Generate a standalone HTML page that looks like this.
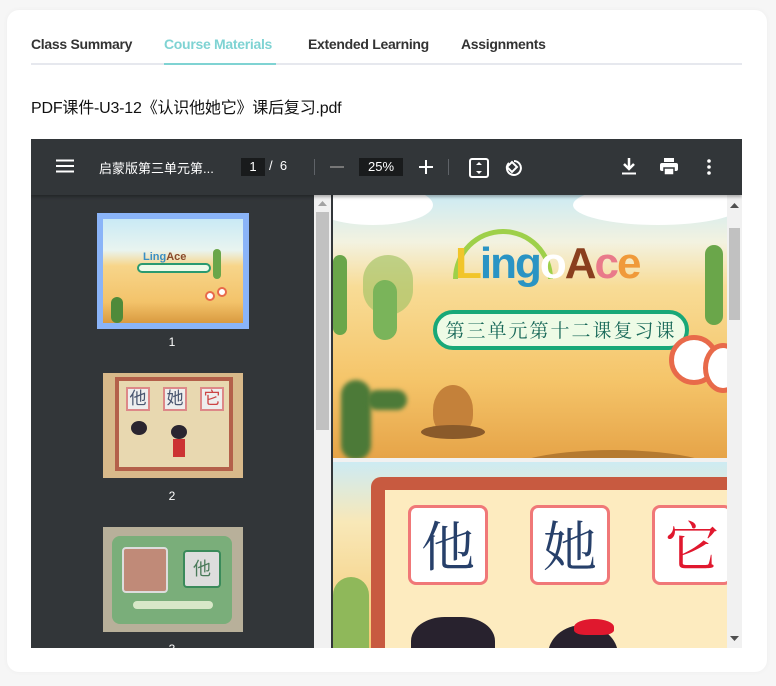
<!DOCTYPE html>
<html><head><meta charset="utf-8"><style>
*{box-sizing:border-box;margin:0;padding:0}
body{width:776px;height:686px;background:#f6f6f6;font-family:"Liberation Sans","Noto Sans CJK SC",sans-serif;position:relative;overflow:hidden}
.card{position:absolute;left:7px;top:10px;width:760px;height:662px;background:#fff;border-radius:12px;box-shadow:0 0 6px rgba(0,0,0,.04)}
.tabs{position:absolute;left:31px;top:36px;font-size:14px;font-weight:bold;color:#333;letter-spacing:-.3px}
.tabs span{position:absolute;white-space:nowrap}
.line{position:absolute;left:31px;top:63px;width:711px;height:2px;background:#e6e8ee}
.act{position:absolute;left:164px;top:63px;width:112px;height:2px;background:#7fd3d3}
.title{position:absolute;left:31px;top:94px;font-size:16px;color:#111;letter-spacing:-.2px}
.viewer{position:absolute;left:31px;top:139px;width:711px;height:509px;background:#323639;overflow:hidden}
.tb{position:absolute;left:0;top:0;width:711px;height:56px;background:#323639;box-shadow:0 2px 3px rgba(0,0,0,.3);z-index:2;color:#fff}
.tb .t{position:absolute;font-size:13px;top:19px}
.box{position:absolute;background:#191b1c;height:18px;top:19px;font-size:13px;color:#fff;text-align:center;line-height:18px}
.sep{position:absolute;top:20px;width:1px;height:16px;background:#5f6368}
.sb{position:absolute;left:283px;top:56px;width:17px;height:453px;background:#f1f1f1}
.main{position:absolute;left:300px;top:56px;width:411px;height:453px;background:#f1f1f1;border-left:2px solid #323639}
.num{position:absolute;color:#fff;font-size:12px;width:20px;text-align:center}
</style></head><body>
<div class="card"></div>
<div class="tabs"><span style="left:0">Class Summary</span><span style="left:133px;color:#7fd3d3">Course Materials</span><span style="left:277px">Extended Learning</span><span style="left:430px">Assignments</span></div>
<div class="line"></div><div class="act"></div>
<div class="title">PDF课件-U3-12《认识他她它》课后复习.pdf</div>
<div class="viewer">
 <div class="tb">
  <svg style="position:absolute;left:25px;top:20px" width="18" height="14"><path d="M0 1.5H18M0 7H18M0 12.5H18" stroke="#fff" stroke-width="2"/></svg>
  <div class="t" style="left:68px">启蒙版第三单元第...</div>
  <div class="box" style="left:210px;width:24px">1</div>
  <div class="t" style="left:238px">/&nbsp; 6</div>
  <div class="sep" style="left:283px"></div>
  <svg style="position:absolute;left:299px;top:27px" width="14" height="2"><path d="M0 1H14" stroke="#777" stroke-width="2"/></svg>
  <div class="box" style="left:328px;width:44px">25%</div>
  <svg style="position:absolute;left:388px;top:21px" width="14" height="14"><path d="M0 7H14M7 0V14" stroke="#fff" stroke-width="2"/></svg>
  <div class="sep" style="left:417px"></div>
  <svg style="position:absolute;left:438px;top:19px" width="20" height="20"><rect x="1" y="1" width="18" height="18" rx="2" fill="none" stroke="#fff" stroke-width="2"/><path d="M10 4l-3 3h6zM10 16l-3-3h6z" fill="#fff"/></svg>
  <svg style="position:absolute;left:472px;top:17px" width="22" height="22"><path d="M11 5a7 7 0 1 1-5 2" fill="none" stroke="#fff" stroke-width="2"/><path d="M4 11l5-5 5 5-5 5z" fill="none" stroke="#fff" stroke-width="2"/></svg>
  <svg style="position:absolute;left:591px;top:19px" width="14" height="17"><path d="M7 0v10M2 6l5 5 5-5" fill="none" stroke="#fff" stroke-width="2.5"/><path d="M0 15.5H14" stroke="#fff" stroke-width="2"/></svg>
  <svg style="position:absolute;left:629px;top:19px" width="18" height="17"><rect x="4" y="0" width="10" height="4" fill="#fff"/><rect x="0" y="5" width="18" height="8" rx="2" fill="#fff"/><rect x="4" y="10" width="10" height="7" fill="#fff" stroke="#323639" stroke-width="1.5"/></svg>
  <svg style="position:absolute;left:676px;top:20px" width="4" height="16"><circle cx="2" cy="2" r="1.8" fill="#fff"/><circle cx="2" cy="8" r="1.8" fill="#fff"/><circle cx="2" cy="14" r="1.8" fill="#fff"/></svg>
 </div>
 <div style="position:absolute;left:66px;top:74px;width:152px;height:116px;background:#8ab4f8"></div>
 <div style="position:absolute;left:72px;top:80px;width:140px;height:104px;background:linear-gradient(#c9eaf5 0%,#e9f4f0 30%,#f7d58a 45%,#f3c36a 80%,#d99a40 100%)">
  <div style="position:absolute;left:34px;top:44px;width:74px;height:10px;border:2px solid #2a9a70;border-radius:5px;background:#eefae9"></div>
  <div style="position:absolute;left:40px;top:32px;font-size:11px;font-weight:bold;color:#3a8fc4">Ling<span style="color:#8a4a2a">Ace</span></div>
  <div style="position:absolute;left:110px;top:30px;width:8px;height:30px;background:#6aa64a;border-radius:4px"></div>
  <div style="position:absolute;left:8px;top:78px;width:12px;height:26px;background:#4f8a3a;border-radius:6px"></div>
  <div style="position:absolute;left:102px;top:72px;width:10px;height:10px;border-radius:50%;background:#fff;border:2px solid #e86a4a"></div>
  <div style="position:absolute;left:114px;top:68px;width:10px;height:10px;border-radius:50%;background:#fff;border:2px solid #e86a4a"></div>
 </div>
 <div class="num" style="left:131px;top:196px">1</div>
 <div style="position:absolute;left:72px;top:234px;width:140px;height:105px;background:#d8b98a">
  <div style="position:absolute;left:12px;top:4px;width:118px;height:94px;border:4px solid #b4604a;background:#e8d8b0"></div>
  <div style="position:absolute;left:23px;top:14px;width:24px;height:24px;border:2px solid #d88;background:#eee;font-size:17px;line-height:20px;text-align:center;color:#4a5670">他</div>
  <div style="position:absolute;left:60px;top:14px;width:24px;height:24px;border:2px solid #d88;background:#eee;font-size:17px;line-height:20px;text-align:center;color:#4a5670">她</div>
  <div style="position:absolute;left:97px;top:14px;width:24px;height:24px;border:2px solid #d88;background:#eee;font-size:17px;line-height:20px;text-align:center;color:#c44">它</div>
  <div style="position:absolute;left:28px;top:48px;width:16px;height:14px;border-radius:50%;background:#2a2530"></div>
  <div style="position:absolute;left:68px;top:52px;width:16px;height:14px;border-radius:50%;background:#2a2530"></div>
  <div style="position:absolute;left:70px;top:66px;width:12px;height:18px;background:#c33"></div>
 </div>
 <div class="num" style="left:131px;top:350px">2</div>
 <div style="position:absolute;left:72px;top:388px;width:140px;height:105px;background:#b8b09a">
  <div style="position:absolute;left:9px;top:9px;width:120px;height:88px;border-radius:8px;background:#7aae7a"></div>
  <div style="position:absolute;left:19px;top:20px;width:46px;height:46px;border:2px solid #ddd;border-radius:4px;background:#c08a78"></div>
  <div style="position:absolute;left:80px;top:23px;width:38px;height:38px;border:2px solid #3a8a5a;border-radius:4px;background:#ddd;font-size:18px;line-height:34px;text-align:center;color:#4a7a5a">他</div>
  <div style="position:absolute;left:30px;top:74px;width:80px;height:8px;border-radius:4px;background:#d8e8c8"></div>
 </div>
 <div class="num" style="left:131px;top:503px">3</div>
 <div class="sb"><div style="position:absolute;left:2px;top:17px;width:13px;height:218px;background:#c1c1c1"></div>
  <svg style="position:absolute;left:4px;top:6px" width="9" height="5"><path d="M0 5L4.5 0 9 5z" fill="#a3a3a3"/></svg></div>
 <div class="main">
  <div style="position:absolute;left:0;top:0;width:394px;height:263px;overflow:hidden;background:linear-gradient(#cdebf3 0%,#f3f2e0 18%,#f8dc96 35%,#f5c56a 70%,#e6a448 100%)">
   <div style="position:absolute;left:-20px;top:-10px;width:120px;height:40px;border-radius:50%;background:#fff"></div>
   <div style="position:absolute;left:240px;top:-10px;width:170px;height:40px;border-radius:50%;background:#fff"></div>
   <div style="position:absolute;left:30px;top:60px;width:50px;height:60px;border-radius:30px;background:#a8c56a;opacity:.7"></div>
   <div style="position:absolute;left:40px;top:85px;width:24px;height:60px;border-radius:12px;background:#7ab45a"></div>
   <div style="position:absolute;left:0px;top:60px;width:14px;height:80px;border-radius:7px;background:#6aa64a"></div>
   <div style="position:absolute;left:8px;top:185px;width:30px;height:80px;border-radius:15px;background:#4c7a38;filter:blur(2px)"></div>
   <div style="position:absolute;left:34px;top:195px;width:40px;height:20px;border-radius:10px;background:#4c7a38;filter:blur(2px)"></div>
   <div style="position:absolute;left:372px;top:50px;width:18px;height:80px;border-radius:9px;background:#6aa64a"></div>
   <div style="position:absolute;left:160px;top:255px;width:240px;height:60px;border-radius:50%;background:#b57a30"></div>
   <div style="position:absolute;left:120px;top:34px;width:100px;height:50px;border-radius:50px 50px 0 0;border:5px solid #9ed04a;border-bottom:none"></div>
   <div style="position:absolute;left:122px;top:44px;font-size:44px;font-weight:bold;letter-spacing:-2px;line-height:50px"><span style="color:#f1c52a">L</span><span style="color:#2a94c4">ing</span><span style="color:#fff">o</span><span style="color:#8a3f1e">A</span><span style="color:#e97a8a">c</span><span style="color:#f09a3a">e</span></div>
   <div style="position:absolute;left:100px;top:115px;width:256px;height:40px;border:4px solid #18a878;border-radius:20px;background:#eefbe6;font-family:'Noto Serif CJK SC',serif;font-size:19px;color:#1a6a5a;text-align:center;line-height:32px;letter-spacing:2px">第三单元第十二课复习课</div>
   <div style="position:absolute;left:336px;top:140px;width:50px;height:50px;border-radius:50%;background:#fff;border:5px solid #e86a4a"></div>
   <div style="position:absolute;left:370px;top:148px;width:40px;height:50px;border-radius:50%;background:#fff;border:5px solid #e86a4a"></div>
   <div style="position:absolute;left:100px;top:190px;width:40px;height:50px;border-radius:50% 50% 40% 40%;background:#c4813a"></div>
   <div style="position:absolute;left:88px;top:230px;width:64px;height:14px;border-radius:50%;background:#8a5a2a"></div>
  </div>
  <div style="position:absolute;left:0;top:267px;width:394px;height:200px;overflow:hidden;background:linear-gradient(#cdebf3 0%,#f8e8b8 30%,#f5c56a 100%)">
   <div style="position:absolute;left:38px;top:15px;width:380px;height:200px;border-radius:10px;background:#c85a40"></div>
   <div style="position:absolute;left:52px;top:28px;width:360px;height:200px;background:#fdebbf"></div>
   <div style="position:absolute;left:75px;top:43px;width:80px;height:80px;border:3px solid #f07878;border-radius:8px;background:#fff;font-family:'Noto Serif CJK SC',serif;font-size:54px;line-height:72px;text-align:center;color:#27406a">他</div>
   <div style="position:absolute;left:197px;top:43px;width:80px;height:80px;border:3px solid #f07878;border-radius:8px;background:#fff;font-family:'Noto Serif CJK SC',serif;font-size:54px;line-height:72px;text-align:center;color:#27406a">她</div>
   <div style="position:absolute;left:319px;top:43px;width:80px;height:80px;border:3px solid #f07878;border-radius:8px;background:#fff;font-family:'Noto Serif CJK SC',serif;font-size:54px;line-height:72px;text-align:center;color:#e0182e">它</div>
   <div style="position:absolute;left:0;top:115px;width:36px;height:90px;border-radius:18px;background:#8fb85a"></div>
   <div style="position:absolute;left:78px;top:155px;width:84px;height:60px;border-radius:40%;background:#28222e"></div>
   <div style="position:absolute;left:215px;top:163px;width:70px;height:60px;border-radius:50%;background:#28222e"></div>
   <div style="position:absolute;left:241px;top:157px;width:40px;height:16px;border-radius:50% 50% 30% 30%;background:#e0182e"></div>
  </div>
  <div style="position:absolute;left:394px;top:0;width:15px;height:453px;background:#f1f1f1">
   <div style="position:absolute;left:2px;top:33px;width:11px;height:92px;background:#c1c1c1"></div>
   <svg style="position:absolute;left:3px;top:8px" width="9" height="5"><path d="M0 5L4.5 0 9 5z" fill="#505050"/></svg>
   <svg style="position:absolute;left:3px;top:441px" width="9" height="5"><path d="M0 0L4.5 5 9 0z" fill="#505050"/></svg>
  </div>
 </div>
</div>
</body></html>
